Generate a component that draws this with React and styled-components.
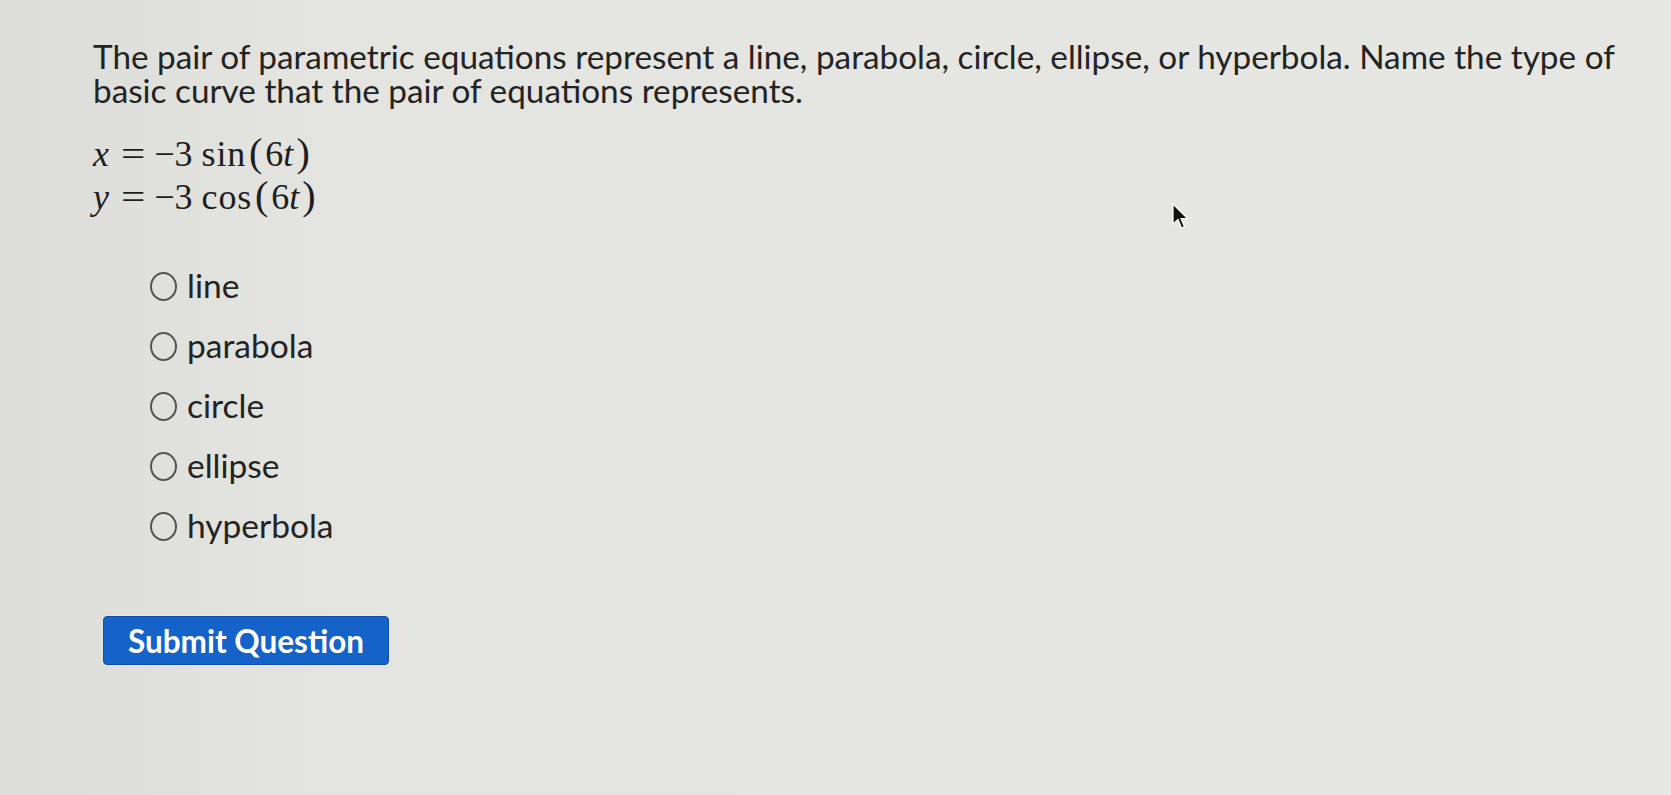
import React from "react";
import styled, { createGlobalStyle } from "styled-components";

const GlobalStyle = createGlobalStyle`
  html, body {
    margin: 0;
    padding: 0;
  }
  body {
    background: #e3e3df;
    font-family: "Lato", "Noto Sans", sans-serif;
    color: #232323;
  }
`;

const Page = styled.div`
  position: relative;
  width: 1671px;
  height: 795px;
  overflow: hidden;
  box-sizing: border-box;
  padding: 39px 0 0 93px;
  background: linear-gradient(90deg, #dcdcd8 0%, #e4e4e0 20%, #e6e6e2 100%);
`;

const Question = styled.p`
  margin: 0;
  font-size: 33.3px;
  line-height: 34px;
  white-space: nowrap;
`;

const Equations = styled.div`
  margin-top: 25px;
  font-family: "Liberation Serif", "DejaVu Serif", serif;
  font-size: 36px;
  line-height: 41px;
  color: #1e1e1e;
`;

const EqLine = styled.div`
  white-space: nowrap;
`;

const Var = styled.i`
  font-style: italic;
`;

const Eq = styled.span`
  display: inline-block;
  margin: 0 11px 0 14px;
  transform: scaleX(1.2);
`;

const Fn = styled.span`
  margin-left: 9px;
  letter-spacing: 0.8px;
`;

const Paren = styled.span`
  font-size: 40px;
  margin: 0 3px;
`;

const Choices = styled.ul`
  list-style: none;
  margin: 50px 0 0 0;
  padding: 0 0 0 57px;
  display: flex;
  flex-direction: column;
  gap: 26px;
`;

const Choice = styled.li`
  display: flex;
  align-items: center;
  gap: 10px;
  height: 34px;
  font-size: 33.5px;
`;

const Radio = styled.span`
  width: 23px;
  height: 25px;
  border: 2px solid #555;
  border-radius: 50%;
  flex-shrink: 0;
  margin-top: 2px;
`;

const SubmitButton = styled.button`
  display: block;
  margin: 74px 0 0 10px;
  width: 286px;
  height: 49px;
  background: #1562c9;
  border: 1px solid #0f4fa8;
  border-radius: 4px;
  color: #fff;
  font-family: "Lato", "Noto Sans", sans-serif;
  font-weight: 700;
  font-size: 31.5px;
  padding: 0;
  box-shadow: 0 0 2px rgba(255, 255, 255, 0.7);
`;

const Cursor = styled.svg`
  position: absolute;
  left: 1172px;
  top: 203px;
`;

const options = ["line", "parabola", "circle", "ellipse", "hyperbola"];

export default function App() {
  return (
    <>
      <GlobalStyle />
      <Page>
        <Question>
          The pair of parametric equations represent a line, parabola, circle,
          ellipse, or hyperbola. Name the type of
          <br />
          basic curve that the pair of equations represents.
        </Question>
        <Equations>
          <EqLine>
            <Var>x</Var>
            <Eq>=</Eq>−3<Fn>sin</Fn>
            <Paren>(</Paren>6<Var>t</Var>
            <Paren>)</Paren>
          </EqLine>
          <EqLine>
            <Var>y</Var>
            <Eq>=</Eq>−3<Fn>cos</Fn>
            <Paren>(</Paren>6<Var>t</Var>
            <Paren>)</Paren>
          </EqLine>
        </Equations>
        <Choices>
          {options.map((o) => (
            <Choice key={o}>
              <Radio />
              {o}
            </Choice>
          ))}
        </Choices>
        <SubmitButton>Submit Question</SubmitButton>
        <Cursor width="18" height="28" viewBox="0 0 18 28">
          <path
            d="M1 1 L1 21 L6 16.5 L9.5 25 L12.5 23.7 L9 15.5 L15.5 15.5 Z"
            fill="#111"
            stroke="#fff"
            strokeWidth="1.2"
          />
        </Cursor>
      </Page>
    </>
  );
}
